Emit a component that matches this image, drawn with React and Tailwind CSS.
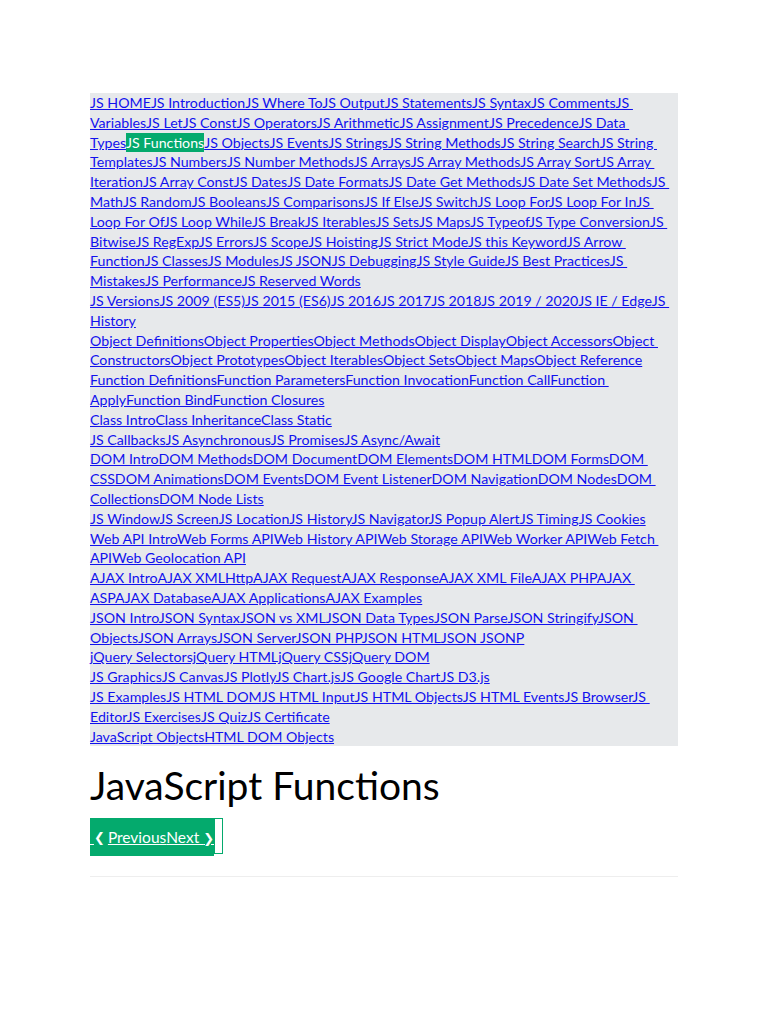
import React from 'react';

// each group is a block of links; lines are split where the reference wraps
const groups = [
  [
    'JS HOMEJS IntroductionJS Where ToJS OutputJS StatementsJS SyntaxJS CommentsJS ',
    'VariablesJS LetJS ConstJS OperatorsJS ArithmeticJS AssignmentJS PrecedenceJS Data ',
    ['Types', { active: 'JS Functions' }, 'JS ObjectsJS EventsJS StringsJS String MethodsJS String SearchJS String '],
    'TemplatesJS NumbersJS Number MethodsJS ArraysJS Array MethodsJS Array SortJS Array ',
    'IterationJS Array ConstJS DatesJS Date FormatsJS Date Get MethodsJS Date Set MethodsJS ',
    'MathJS RandomJS BooleansJS ComparisonsJS If ElseJS SwitchJS Loop ForJS Loop For InJS ',
    'Loop For OfJS Loop WhileJS BreakJS IterablesJS SetsJS MapsJS TypeofJS Type ConversionJS ',
    'BitwiseJS RegExpJS ErrorsJS ScopeJS HoistingJS Strict ModeJS this KeywordJS Arrow ',
    'FunctionJS ClassesJS ModulesJS JSONJS DebuggingJS Style GuideJS Best PracticesJS ',
    'MistakesJS PerformanceJS Reserved Words',
  ],
  [
    'JS VersionsJS 2009 (ES5)JS 2015 (ES6)JS 2016JS 2017JS 2018JS 2019 / 2020JS IE / EdgeJS ',
    'History',
  ],
  [
    'Object DefinitionsObject PropertiesObject MethodsObject DisplayObject AccessorsObject ',
    'ConstructorsObject PrototypesObject IterablesObject SetsObject MapsObject Reference',
  ],
  [
    'Function DefinitionsFunction ParametersFunction InvocationFunction CallFunction ',
    'ApplyFunction BindFunction Closures',
  ],
  ['Class IntroClass InheritanceClass Static'],
  ['JS CallbacksJS AsynchronousJS PromisesJS Async/Await'],
  [
    'DOM IntroDOM MethodsDOM DocumentDOM ElementsDOM HTMLDOM FormsDOM ',
    'CSSDOM AnimationsDOM EventsDOM Event ListenerDOM NavigationDOM NodesDOM ',
    'CollectionsDOM Node Lists',
  ],
  ['JS WindowJS ScreenJS LocationJS HistoryJS NavigatorJS Popup AlertJS TimingJS Cookies'],
  [
    'Web API IntroWeb Forms APIWeb History APIWeb Storage APIWeb Worker APIWeb Fetch ',
    'APIWeb Geolocation API',
  ],
  [
    'AJAX IntroAJAX XMLHttpAJAX RequestAJAX ResponseAJAX XML FileAJAX PHPAJAX ',
    'ASPAJAX DatabaseAJAX ApplicationsAJAX Examples',
  ],
  [
    'JSON IntroJSON SyntaxJSON vs XMLJSON Data TypesJSON ParseJSON StringifyJSON ',
    'ObjectsJSON ArraysJSON ServerJSON PHPJSON HTMLJSON JSONP',
  ],
  ['jQuery SelectorsjQuery HTMLjQuery CSSjQuery DOM'],
  ['JS GraphicsJS CanvasJS PlotlyJS Chart.jsJS Google ChartJS D3.js'],
  [
    'JS ExamplesJS HTML DOMJS HTML InputJS HTML ObjectsJS HTML EventsJS BrowserJS ',
    'EditorJS ExercisesJS QuizJS Certificate',
  ],
  ['JavaScript ObjectsHTML DOM Objects'],
];

const Line = ({ line }) => {
  if (typeof line === 'string') {
    return <div className="whitespace-pre"><a href="#" className="underline">{line}</a></div>;
  }
  return (
    <div className="whitespace-pre">
      {line.map((seg, i) =>
        typeof seg === 'string' ? (
          <a key={i} href="#" className="underline">{seg}</a>
        ) : (
          <a key={i} href="#" className="bg-[#04AA6D] text-white py-[1px]">{seg.active}</a>
        )
      )}
    </div>
  );
};

export default function App() {
  return (
    <div className="bg-white min-h-[1024px] px-[90px] pt-[93px] font-['Lato','Liberation_Sans',sans-serif]">
      <nav className="bg-[#e7e9eb] text-[#1111ee] text-[14.2px] leading-[19.8px]">
        {groups.map((g, i) => (
          <div key={i}>
            {g.map((line, j) => (
              <Line key={j} line={line} />
            ))}
          </div>
        ))}
      </nav>

      <h1 className="text-[39px] leading-[52px] mt-[13px] text-black font-normal">JavaScript Functions</h1>

      <div className="flex mt-[7px]">
        <div className="flex items-center h-[38px] bg-[#04AA6D] text-white text-[15.5px]">
          <span className="underline whitespace-pre"> </span>
          <span className="font-['DejaVu_Sans'] text-[13px] mr-[3px]">❮</span>
          <a href="#" className="underline whitespace-pre">Previous</a>
          <a href="#" className="underline whitespace-pre">Next <span className="font-['DejaVu_Sans'] text-[13px]">❯</span></a>
        </div>
        <div className="w-[9px] h-[36px] bg-white border border-[#04AA6D]" />
      </div>

      <hr className="mt-[20px] border-[#eeeeee]" />
    </div>
  );
}
